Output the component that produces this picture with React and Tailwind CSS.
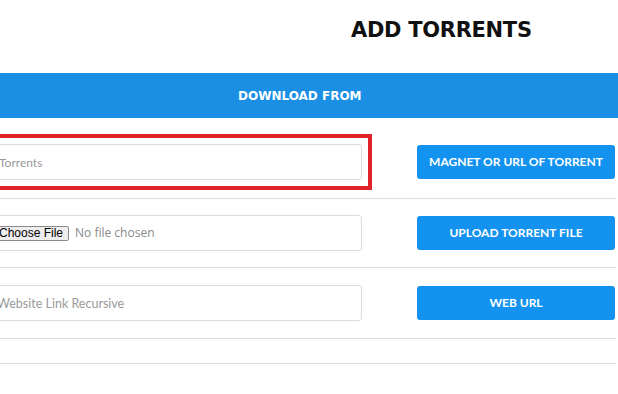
import React from "react";

const heading = { fontFamily: '"DejaVu Sans", "Open Sans", sans-serif' };
const btnFont = { fontFamily: 'Lato, "Open Sans", sans-serif' };

function Row({ children, button, className }) {
  return (
    <div className={"flex items-center border-b border-[#dcdcdc] w-[628px] " + className}>
      <div className="flex-1">{children}</div>
      <button
        className="ml-[55px] mr-[1px] w-[198px] h-[34px] rounded-[3px] bg-[#1492ef] text-white text-[12px] font-bold"
        style={btnFont}
      >
        {button}
      </button>
    </div>
  );
}

export default function App() {
  return (
    <div className="relative w-[618px] h-[394px] overflow-hidden bg-white">
      <div className="-ml-[12px] w-[630px]">
        <h1
          className="pl-[363px] pt-[18px] h-[73px] text-[21px] leading-[24px] font-bold text-[#111] tracking-[-0.3px]"
          style={heading}
        >
          ADD TORRENTS
        </h1>
        <div className="h-[45px] bg-[#1a8fe4] flex items-center pl-[250px]">
          <span className="text-white text-[12px] font-bold" style={heading}>
            DOWNLOAD FROM
          </span>
        </div>

        <Row button="MAGNET OR URL OF TORRENT" className="pt-[26px] pb-[18px]">
          <input
            className="w-full h-[36px] border border-[#dcdcdc] rounded-[3px] pl-[10px] text-[12px] placeholder:text-[#9a9a9a] outline-none"
            style={{ fontFamily: "Lato, sans-serif" }}
            placeholder="Torrents"
            readOnly
          />
        </Row>

        <Row button="UPLOAD TORRENT FILE" className="py-[16px]">
          <div className="w-full h-[36px] border border-[#dcdcdc] rounded-[3px] flex items-center pl-[4px]">
            <span
              className="h-[15px] flex items-center px-[5px] border border-[#8a8a8a] bg-[#eeeeee] rounded-[2px] text-[12px] text-black leading-none"
              style={{ fontFamily: '"Liberation Sans", Arial, sans-serif' }}
            >
              Choose File
            </span>
            <span
              className="ml-[6px] text-[12px] text-[#8a8a8a]"
              style={{ fontFamily: '"Open Sans", sans-serif' }}
            >
              No file chosen
            </span>
          </div>
        </Row>

        <Row button="WEB URL" className="pt-[17px] pb-[17px]">
          <input
            className="w-full h-[36px] border border-[#dcdcdc] rounded-[3px] pl-[8px] text-[12.5px] placeholder:text-[#9a9a9a] outline-none"
            style={{ fontFamily: "Lato, sans-serif" }}
            placeholder="Website Link Recursive"
            readOnly
          />
        </Row>

        <div className="h-[25px] border-b border-[#dcdcdc] w-[628px]" />
      </div>

      <div className="absolute -left-[10px] top-[134px] w-[382px] h-[56px] border-4 border-[#e0222b] pointer-events-none" />
    </div>
  );
}
